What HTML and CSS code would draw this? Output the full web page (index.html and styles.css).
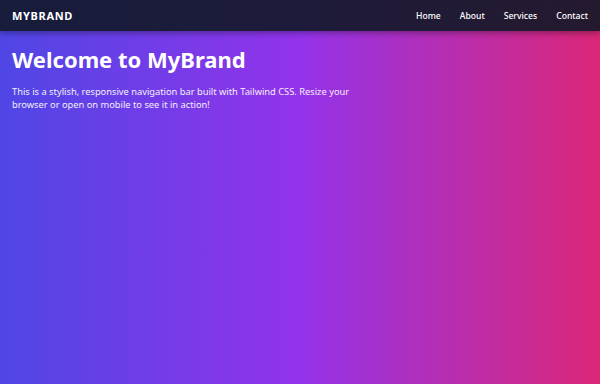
FILE: index.html
```html
<!DOCTYPE html>
<html lang="en">
<head>
    <meta charset="UTF-8">
    <title>MyBrand</title>
    <link rel="stylesheet" href="styles.css">
</head>
<body>
    <nav class="navbar">
        <div class="brand">MYBRAND</div>
        <ul class="links">
            <li><a href="#">Home</a></li>
            <li><a href="#">About</a></li>
            <li><a href="#">Services</a></li>
            <li><a href="#">Contact</a></li>
        </ul>
    </nav>
    <main class="hero">
        <h1>Welcome to MyBrand</h1>
        <p>This is a stylish, responsive navigation bar built with Tailwind CSS. Resize your browser or open on mobile to see it in action!</p>
    </main>
</body>
</html>
```

FILE: styles.css
```css
html, body {
    height: 100%;
}
body {
    margin: 0;
    font-family: "Noto Sans", "Open Sans", sans-serif;
    color: white;
    background: linear-gradient(to right, #4f46e5, #9333ea, #db2777);
}
.navbar {
    height: 31px;
    padding: 0 12px;
    display: flex;
    justify-content: space-between;
    align-items: center;
    background-color: rgba(17, 24, 39, 0.9);
    box-shadow: 0 2px 6px rgba(0, 0, 0, 0.35);
}
.brand {
    font-size: 11px;
    line-height: 14px;
    font-weight: bold;
    letter-spacing: 0.06em;
}
.links {
    list-style: none;
    margin: 0;
    padding: 0;
    display: flex;
    gap: 19px;
    font-size: 8.6px;
    line-height: 12px;
}
.links a {
    color: white;
    text-decoration: none;
    font-weight: 500;
}
.hero {
    padding: 12px 12px;
}
.hero h1 {
    margin: 0 0 10px;
    font-size: 22px;
    line-height: 32px;
    font-weight: bold;
}
.hero p {
    margin: 0;
    max-width: 360px;
    font-size: 9.3px;
    line-height: 13px;
    opacity: 0.92;
}
```
